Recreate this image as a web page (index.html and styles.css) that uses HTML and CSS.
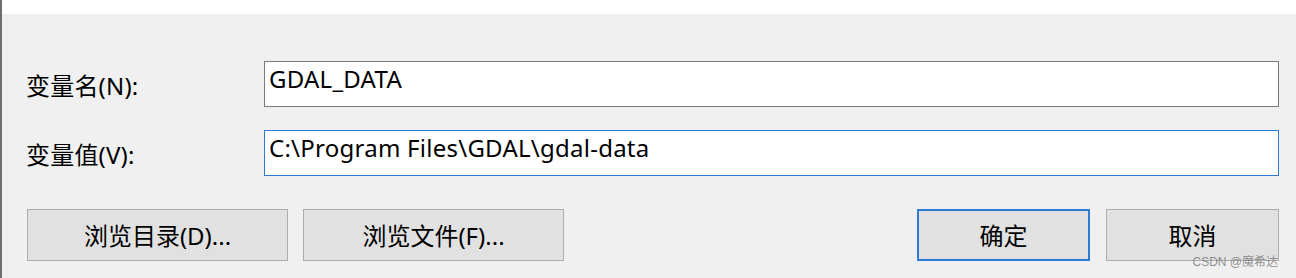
FILE: index.html
```html
<!DOCTYPE html>
<html lang="zh-CN">
    <head>
      <meta charset="UTF-8">
      <title>编辑系统变量</title>
      <link rel="stylesheet" href="styles.css">
    </head>
    <body>
      <div class="top"></div>
      <div class="dialog">
        <div class="row">
          <label class="label">变量名(N):</label>
          <div class="field">GDAL_DATA</div>
        </div>
        <div class="row">
          <label class="label">变量值(V):</label>
          <div class="field focus">C:\Program Files\GDAL\gdal-data</div>
        </div>
        <div class="buttons">
          <div class="btn wide">浏览目录(D)...</div>
          <div class="btn wide">浏览文件(F)...</div>
          <div class="spacer"></div>
          <div class="btn default">确定</div>
          <div class="btn">取消</div>
        </div>
      </div>
      <div class="mark">CSDN @魔希达</div>
    </body>
</html>
```

FILE: styles.css
```css
/* 重置默认样式 */
* {
    margin: 0;
    padding: 0;
    box-sizing: border-box;
}
html, body {
    height: 278px;
    overflow: hidden;
}
body {
    position: relative;
    background: #f0f0f0;
    border-left: 2px solid #6e6e6e;
    font-family: "Segoe UI", "Noto Sans", "Noto Sans CJK SC", sans-serif;
    font-size: 24px;
    color: #000;
}
.top {
    height: 14px;
    background: #ffffff;
}
.dialog {
    padding: 47px 17px 0 24px;
}
.row {
    display: flex;
    align-items: center;
    margin-bottom: 23px;
}
.label {
    width: 238px;
    font-size: 24px;
    letter-spacing: 0.2px;
}
.field {
    width: 1015px;
    height: 46px;
    background: #ffffff;
    border: 1px solid #7a7a7a;
    padding: 0 0 0 4px;
    line-height: 34px;
    letter-spacing: 0.25px;
    white-space: nowrap;
}
.field.focus {
    border-color: #2c7cd6;
}
.buttons {
    display: flex;
    margin-top: 33px;
    padding-left: 1px;
}
.btn {
    width: 173px;
    height: 52px;
    background: #e1e1e1;
    border: 1px solid #adadad;
    display: flex;
    align-items: center;
    justify-content: center;
    font-size: 24px;
    padding-bottom: 1px;
    margin-right: 16px;
}
.btn.wide {
    width: 261px;
    margin-right: 15px;
}
.btn.default {
    border: 2px solid #2c7cd6;
}
.btn:last-child {
    margin-right: 0;
}
.spacer {
    flex: 1;
}
.mark {
    position: absolute;
    right: 18px;
    bottom: 9px;
    font-size: 12px;
    color: rgba(110, 110, 110, 0.75);
    font-family: "Liberation Sans", "Noto Sans CJK SC", sans-serif;
}
```
